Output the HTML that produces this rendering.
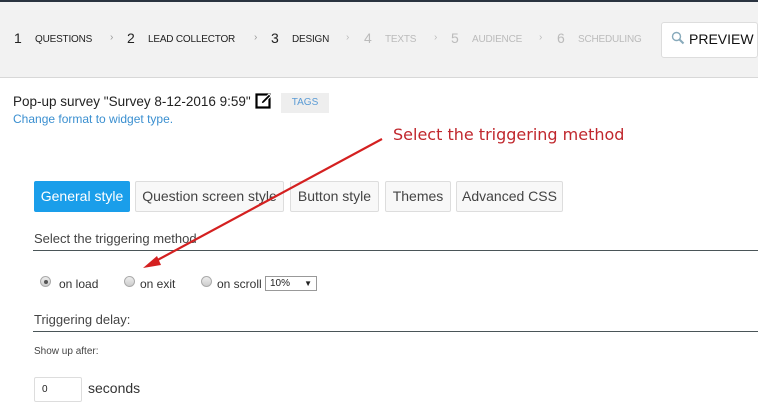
<!DOCTYPE html>
<html><head><style>
*{margin:0;padding:0;box-sizing:border-box}
body{width:758px;height:414px;background:#fff;font-family:"Liberation Sans",sans-serif;position:relative;overflow:hidden;color:#222}
.a{position:absolute;white-space:nowrap}
.hdr{position:absolute;left:0;top:0;width:758px;height:78px;background:#f2f2f2;border-top:2px solid #2a3440;border-bottom:1px solid #d8d8d8}
.n{font-size:14px}
.s{font-size:10px;letter-spacing:-0.2px}
.g{color:#bbb}
.btn{position:absolute;top:181px;height:31px;border:1px solid #ddd;border-radius:2px;background:#f8f8f8;font-size:14px;color:#444;line-height:29px;text-align:center}
.radio{position:absolute;width:11px;height:11px;border-radius:50%;border:1px solid #aaa;background:linear-gradient(#eee,#ccc)}
</style></head><body>
<div class="hdr"></div>
<div class="a n" style="left:14px;top:30px">1</div>
<div class="a s" style="left:35px;top:34px">QUESTIONS</div>
<div class="a s" style="left:110px;top:32px;color:#999">›</div>
<div class="a n" style="left:127px;top:30px">2</div>
<div class="a s" style="left:148px;top:34px">LEAD COLLECTOR</div>
<div class="a s" style="left:254px;top:32px;color:#999">›</div>
<div class="a n" style="left:271px;top:30px">3</div>
<div class="a s" style="left:292px;top:34px">DESIGN</div>
<div class="a s g" style="left:346px;top:32px">›</div>
<div class="a n g" style="left:364px;top:30px">4</div>
<div class="a s g" style="left:385px;top:34px">TEXTS</div>
<div class="a s g" style="left:434px;top:32px">›</div>
<div class="a n g" style="left:451px;top:30px">5</div>
<div class="a s g" style="left:472px;top:34px">AUDIENCE</div>
<div class="a s g" style="left:539px;top:32px">›</div>
<div class="a n g" style="left:557px;top:30px">6</div>
<div class="a s g" style="left:578px;top:34px">SCHEDULING</div>
<div class="a" style="left:661px;top:22px;width:97px;height:36px;background:#fff;border:1px solid #ddd;border-radius:3px"></div>
<svg class="a" style="left:671px;top:31px" width="14" height="14"><circle cx="5.5" cy="5.5" r="4" fill="none" stroke="#8ab" stroke-width="1.4"/><line x1="8.5" y1="8.5" x2="12.5" y2="12.5" stroke="#8ab" stroke-width="2"/></svg>
<div class="a" style="left:689px;top:31px;font-size:14px;color:#111">PREVIEW</div>
<div class="a" style="left:13px;top:94px;font-size:13.5px;color:#222">Pop-up survey "Survey 8-12-2016 9:59"</div>
<svg class="a" style="left:255px;top:92px" width="18" height="18"><rect x="1.5" y="2.5" width="13" height="13" fill="none" stroke="#000" stroke-width="2.2"/><path d="M6 12 L7 9 L14 2 L16 4 L9 11 Z" fill="#000" stroke="#fff" stroke-width="1"/></svg>
<div class="a" style="left:281px;top:93px;width:48px;height:20px;background:#eee;color:#5a9bd5;font-size:10px;text-align:center;line-height:20px">TAGS</div>
<div class="a" style="left:13px;top:112px;font-size:12px;color:#3a8fd0">Change format to widget type.</div>
<div class="a" style="left:393px;top:125px;font-size:16px;color:#c0272d;font-family:'DejaVu Sans',sans-serif">Select the triggering method</div>
<div class="btn" style="left:34px;width:96px;background:#1a9eea;border-color:#1a9eea;color:#fff">General style</div>
<div class="btn" style="left:135px;width:149px">Question screen style</div>
<div class="btn" style="left:290px;width:89px">Button style</div>
<div class="btn" style="left:385px;width:66px">Themes</div>
<div class="btn" style="left:456px;width:107px">Advanced CSS</div>
<div class="a" style="left:34px;top:231px;font-size:13px;color:#444">Select the triggering method</div>
<div class="a" style="left:33px;top:250px;width:725px;height:1px;background:#4a5558"></div>
<div class="radio" style="left:40px;top:276px"><div style="margin:2.5px;width:4px;height:4px;border-radius:50%;background:#555"></div></div>
<div class="a" style="left:59px;top:277px;font-size:12px;color:#333">on load</div>
<div class="radio" style="left:124px;top:276px"></div>
<div class="a" style="left:140px;top:277px;font-size:12px;color:#333">on exit</div>
<div class="radio" style="left:201px;top:276px"></div>
<div class="a" style="left:217px;top:277px;font-size:12px;color:#333">on scroll</div>
<div class="a" style="left:265px;top:276px;width:52px;height:15px;border:1px solid #999;font-size:10px;line-height:13px;padding-left:4px">10% <span style="position:absolute;right:4px;font-size:8px">▼</span></div>
<div class="a" style="left:34px;top:312px;font-size:13px;color:#444">Triggering delay:</div>
<div class="a" style="left:33px;top:331px;width:725px;height:1px;background:#4a5558"></div>
<div class="a" style="left:34px;top:346px;font-size:10px;color:#444">Show up after:</div>
<div class="a" style="left:34px;top:377px;width:48px;height:25px;border:1px solid #ddd;border-radius:2px;font-size:10px;line-height:23px;padding-left:7px">0</div>
<div class="a" style="left:88px;top:380px;font-size:14px;color:#333">seconds</div>
<svg class="a" style="left:0;top:0" width="758" height="414"><line x1="382" y1="139" x2="152" y2="263" stroke="#d42020" stroke-width="2.2"/><path d="M143 268 L157 256 L161 265 Z" fill="#d42020"/></svg>
</body></html>
